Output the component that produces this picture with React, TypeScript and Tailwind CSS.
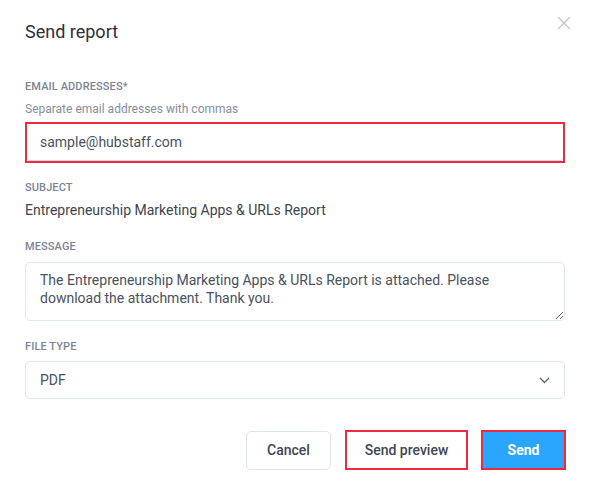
import React from "react";

const labelCls =
  "text-[11px] leading-[14px] font-medium uppercase tracking-[0.01em] text-[#7b8597]";

export default function App() {
  return (
    <div
      className="w-[589px] h-[497px] bg-white relative"
      style={{ fontFamily: "Roboto, 'Noto Sans', Arial, sans-serif" }}
    >
      <button className="absolute left-[557px] top-[15px] w-[15px] h-[15px] text-[#c3c6cc]" aria-label="Close">
        <svg viewBox="0 0 14 14" width="14" height="14" fill="none" stroke="currentColor" strokeWidth="1.3">
          <path d="M1 1 L13 13 M13 1 L1 13" />
        </svg>
      </button>

      <div className="pl-[25px] pr-[24px] pt-[20px] flex flex-col">
        <h2 className="text-[18px] leading-[24px] text-[#2c313c] font-normal">Send report</h2>

        <div className={`${labelCls} mt-[36px]`}>Email addresses*</div>
        <div className="mt-[7px] text-[12px] leading-[16px] text-[#858e9e]">
          Separate email addresses with commas
        </div>

        <div className="mt-[5px] h-[41px] border-2 border-[#f2283e]">
          <div className="h-full border-b border-[#cfd6e0] rounded-b-[3px] flex items-center pl-[13px] text-[14px] text-[#4a5160]">
            sample@hubstaff.com
          </div>
        </div>

        <div className={`${labelCls} mt-[18px]`}>Subject</div>
        <div className="mt-[5px] text-[14px] leading-[20px] text-[#3e4451]">
          Entrepreneurship Marketing Apps &amp; URLs Report
        </div>

        <div className={`${labelCls} mt-[20px]`}>Message</div>
        <textarea
          className="mt-[8px] h-[59px] w-full border border-[#e2e6ed] rounded-[5px] pl-[14px] pr-[14px] pt-[8px] text-[14px] leading-[18px] text-[#4a5160] resize-y outline-none"
          defaultValue="The Entrepreneurship Marketing Apps & URLs Report is attached. Please download the attachment. Thank you."
        />

        <div className={`${labelCls} mt-[19px]`}>File type</div>
        <div className="mt-[7px] h-[38px] border border-[#e2e6ed] rounded-[5px] flex items-center justify-between pl-[14px] pr-[14px] text-[14px] text-[#4a5160]">
          <span>PDF</span>
          <svg width="11" height="7" viewBox="0 0 11 7" fill="none" stroke="#5b6372" strokeWidth="1.3">
            <path d="M1 1 L5.5 5.5 L10 1" />
          </svg>
        </div>

        <div className="mt-[31px] flex justify-end items-center">
          <button className="w-[85px] h-[39px] border border-[#dfe4ec] rounded-[5px] text-[14px] font-medium text-[#3f4654]">
            Cancel
          </button>
          <button className="ml-[14px] w-[123px] h-[40px] border-2 border-[#f2283e] bg-white text-[14px] font-medium text-[#3f4654]">
            Send preview
          </button>
          <button className="ml-[13px] mr-[-1px] w-[85px] h-[40px] border-2 border-[#f2283e] bg-[#2ba6ff] text-[14px] font-bold text-white">
            Send
          </button>
        </div>
      </div>
    </div>
  );
}
